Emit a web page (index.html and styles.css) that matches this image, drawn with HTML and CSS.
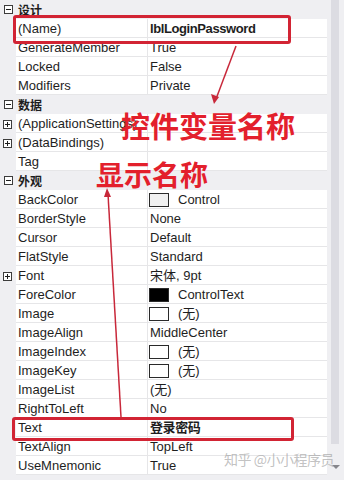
FILE: index.html
```html
<!DOCTYPE html>
<html lang="zh">
<head>
    <meta charset="UTF-8">
    <meta name="viewport" content="width=device-width, initial-scale=1.0">
    <title>属性</title>
    <link rel="stylesheet" href="styles.css">
</head>
<body>

<div class="ventana">
    <div class="propiedades">
        <div class="cat"><span class="gut"><i class="tog"></i></span><span class="cat-nom">设计</span></div>
        <div class="fila"><span class="gut"></span><span class="nom">(Name)</span><span class="val negrita">lblLoginPassword</span></div>
        <div class="fila"><span class="gut"></span><span class="nom">GenerateMember</span><span class="val">True</span></div>
        <div class="fila"><span class="gut"></span><span class="nom">Locked</span><span class="val">False</span></div>
        <div class="fila"><span class="gut"></span><span class="nom">Modifiers</span><span class="val">Private</span></div>

        <div class="cat"><span class="gut"><i class="tog"></i></span><span class="cat-nom">数据</span></div>
        <div class="fila"><span class="gut"><i class="tog mas"></i></span><span class="nom">(ApplicationSettings)</span><span class="val"></span></div>
        <div class="fila"><span class="gut"><i class="tog mas"></i></span><span class="nom">(DataBindings)</span><span class="val"></span></div>
        <div class="fila"><span class="gut"></span><span class="nom">Tag</span><span class="val"></span></div>

        <div class="cat"><span class="gut"><i class="tog"></i></span><span class="cat-nom">外观</span></div>
        <div class="fila"><span class="gut"></span><span class="nom">BackColor</span><span class="val"><b class="muestra gris"></b>Control</span></div>
        <div class="fila"><span class="gut"></span><span class="nom">BorderStyle</span><span class="val">None</span></div>
        <div class="fila"><span class="gut"></span><span class="nom">Cursor</span><span class="val">Default</span></div>
        <div class="fila"><span class="gut"></span><span class="nom">FlatStyle</span><span class="val">Standard</span></div>
        <div class="fila"><span class="gut"><i class="tog mas"></i></span><span class="nom">Font</span><span class="val">宋体, 9pt</span></div>
        <div class="fila"><span class="gut"></span><span class="nom">ForeColor</span><span class="val"><b class="muestra negro"></b>ControlText</span></div>
        <div class="fila"><span class="gut"></span><span class="nom">Image</span><span class="val"><b class="muestra"></b>(无)</span></div>
        <div class="fila"><span class="gut"></span><span class="nom">ImageAlign</span><span class="val">MiddleCenter</span></div>
        <div class="fila"><span class="gut"></span><span class="nom">ImageIndex</span><span class="val"><b class="muestra"></b>(无)</span></div>
        <div class="fila"><span class="gut"></span><span class="nom">ImageKey</span><span class="val"><b class="muestra"></b>(无)</span></div>
        <div class="fila"><span class="gut"></span><span class="nom">ImageList</span><span class="val">(无)</span></div>
        <div class="fila"><span class="gut"></span><span class="nom">RightToLeft</span><span class="val">No</span></div>
        <div class="fila"><span class="gut"></span><span class="nom">Text</span><span class="val negrita">登录密码</span></div>
        <div class="fila"><span class="gut"></span><span class="nom">TextAlign</span><span class="val">TopLeft</span></div>
        <div class="fila"><span class="gut"></span><span class="nom">UseMnemonic</span><span class="val">True</span></div>
    </div>

    <div class="barra">
        <div class="pulgar"></div>
        <div class="flecha"></div>
    </div>

    <!-- anotaciones encima de la captura -->
    <div class="marco marco-nombre"></div>
    <div class="marco marco-texto"></div>
    <div class="nota nota-variable">控件变量名称</div>
    <div class="nota nota-texto">显示名称</div>
    <svg class="flechas" width="344" height="480" viewBox="0 0 344 480">
        <line x1="236" y1="46" x2="216" y2="99" stroke="#c8283a" stroke-width="1.5"/>
        <polygon points="214,104 211,94 219,97" fill="#c8283a"/>
        <line x1="121" y1="417" x2="108" y2="194" stroke="#c8283a" stroke-width="1.5"/>
        <polygon points="107,188 104,197 111,197" fill="#c8283a"/>
    </svg>
    <div class="marca">知乎 @小小程序员</div>
</div>

</body>
</html>
```

FILE: styles.css
```css
body {
    margin: 0;
    font-family: "Liberation Sans", "Noto Sans CJK SC", sans-serif;
    font-size: 13px;
    color: #1e1e1e;
    background-color: #efeff2;
}
.ventana {
    position: relative;
    width: 344px;
    height: 480px;
    display: flex;
    overflow: hidden;
    background-color: #efeff2;
}
.propiedades {
    width: 327px;
}
.fila, .cat {
    display: grid;
    grid-template-columns: 16px 132px 1fr;
    height: 19px;
    line-height: 20px;
}
.cat {
    grid-template-columns: 16px 1fr;
}
.gut {
    position: relative;
    background-color: #efeff2;
}
.nom, .val {
    background-color: #fff;
    border-bottom: 1px solid #e6e6e8;
    white-space: nowrap;
    overflow: hidden;
}
.nom {
    padding-left: 2px;
    border-right: 1px solid #e6e6e8;
}
.val {
    padding-left: 2px;
    padding-top: 2px;
    display: flex;
    align-items: center;
    line-height: 16px;
}
.negrita {
    font-weight: bold;
    letter-spacing: -0.4px;
}
.cat-nom {
    padding-left: 2px;
    font-weight: bold;
    font-family: "Noto Sans CJK SC", sans-serif;
    font-size: 12px;
}
.tog {
    position: absolute;
    left: 4px;
    top: 5px;
    width: 7px;
    height: 7px;
    border: 1px solid #3c3c3c;
    background-color: #fff;
}
.tog::before {
    content: "";
    position: absolute;
    left: 1px;
    top: 3px;
    width: 5px;
    height: 1px;
    background-color: #1e1e1e;
}
.mas {
    left: 3px;
    top: 6px;
}
.mas::after {
    content: "";
    position: absolute;
    left: 3px;
    top: 1px;
    width: 1px;
    height: 5px;
    background-color: #1e1e1e;
}
.muestra {
    display: inline-block;
    width: 18px;
    height: 12px;
    border: 1px solid #2a2a2a;
    background-color: #fff;
    margin-right: 9px;
    margin-left: -1px;
}
.muestra.gris {
    background-color: #f0f0f0;
}
.muestra.negro {
    background-color: #000;
}
.barra {
    position: relative;
    width: 17px;
    background-color: #efeff2;
}
.pulgar {
    position: absolute;
    left: 4px;
    top: 0;
    width: 8px;
    height: 444px;
    background-color: #dcdce2;
}
.flecha {
    position: absolute;
    left: 5px;
    top: 465px;
    width: 0;
    height: 0;
    border-left: 4px solid transparent;
    border-right: 4px solid transparent;
    border-top: 4px solid #86868c;
}
.marco {
    position: absolute;
    border: 3px solid #d22434;
    border-radius: 3px;
}
.marco-nombre {
    left: 13px;
    top: 15px;
    width: 272px;
    height: 23px;
}
.marco-texto {
    left: 12px;
    top: 417px;
    width: 276px;
    height: 18px;
}
.nota {
    position: absolute;
    font-family: "Noto Sans CJK SC", sans-serif;
    font-weight: bold;
    color: #e3202c;
    line-height: 1;
    white-space: nowrap;
}
.nota-variable {
    left: 121px;
    top: 111px;
    font-size: 29px;
}
.nota-texto {
    left: 96px;
    top: 160px;
    font-size: 28px;
}
.flechas {
    position: absolute;
    left: 0;
    top: 0;
}
.marca {
    position: absolute;
    left: 224px;
    top: 449px;
    font-family: "Noto Sans CJK SC", sans-serif;
    font-size: 14px;
    color: rgba(160, 160, 160, 0.65);
    white-space: nowrap;
    letter-spacing: -0.5px;
}
```
